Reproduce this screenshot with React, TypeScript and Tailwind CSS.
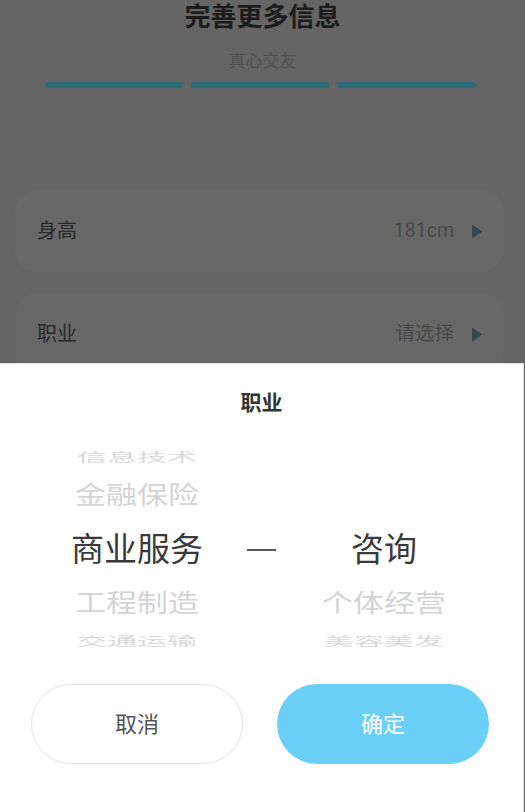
import React from "react";

const font = { fontFamily: '"Roboto", "Noto Sans CJK SC", sans-serif' };

type Row = { label: string; value: string };

const rows: Row[] = [
  { label: "身高", value: "181cm" },
  { label: "职业", value: "请选择" },
];

const leftItems = ["信息技术", "金融保险", "商业服务", "工程制造", "交通运输"];
const rightItems = ["", "", "咨询", "个体经营", "美容美发"];

function Arrow() {
  return (
    <svg width="12" height="15" viewBox="0 0 12 15" className="shrink-0">
      <path d="M1 0.5 L11.5 7.5 L1 14.5 Z" fill="#34494c" />
    </svg>
  );
}

function WheelColumn({ items, className }: { items: string[]; className: string }) {
  return (
    <div className={`flex flex-col items-center ${className}`}>
      {/* outer top (tilted away) */}
      <div className="flex h-[24px] items-center justify-center">
        <span className="block text-[30px] leading-[30px] text-[#d9d9d9] scale-y-[0.4] whitespace-nowrap">
          {items[0]}
        </span>
      </div>
      <div className="flex h-[52px] items-center justify-center">
        <span className="block text-[31px] leading-[36px] text-[#d4d4d4] scale-y-[0.8] whitespace-nowrap">
          {items[1]}
        </span>
      </div>
      <div className="flex h-[56px] items-center justify-center">
        <span className="block text-[33px] leading-[40px] text-[#3a3a3a] whitespace-nowrap">
          {items[2]}
        </span>
      </div>
      <div className="flex h-[52px] items-center justify-center">
        <span className="block text-[31px] leading-[36px] text-[#d4d4d4] scale-y-[0.8] whitespace-nowrap">
          {items[3]}
        </span>
      </div>
      <div className="flex h-[24px] items-center justify-center">
        <span className="block text-[30px] leading-[30px] text-[#d9d9d9] scale-y-[0.4] whitespace-nowrap">
          {items[4]}
        </span>
      </div>
    </div>
  );
}

export default function App() {
  return (
    <div className="relative h-[812px] w-[525px] overflow-hidden bg-[#646564]" style={font}>
      {/* Dimmed page behind the sheet */}
      <div className="flex flex-col">
        <h1 className="text-center text-[26px] font-bold leading-[34px] text-[#1c1c1c]">
          完善更多信息
        </h1>
        <p className="mt-[15px] text-center text-[17px] leading-[24px] text-[#505050]">
          真心交友
        </p>
        <div className="mt-[9px] flex gap-[8px] pl-[45px]">
          <div className="h-[6px] w-[138px] rounded-full bg-[#2b6b7a]" />
          <div className="h-[6px] w-[138px] rounded-full bg-[#2b6b7a]" />
          <div className="h-[6px] w-[139px] rounded-full bg-[#2b6b7a]" />
        </div>

        <div className="mt-[102px] flex flex-col gap-[21px] px-[15px] pr-[21px]">
          {rows.map((r) => (
            <div
              key={r.label}
              className="flex h-[82px] items-center justify-between rounded-[22px] bg-[#686868] pl-[22px] pr-[21px]"
            >
              <span className="text-[20px] text-[#282828]">{r.label}</span>
              <div className="flex items-center gap-[17px]">
                <span className="text-[19.5px] text-[#484848]">{r.value}</span>
                <Arrow />
              </div>
            </div>
          ))}
        </div>
      </div>

      {/* Bottom sheet picker */}
      <div className="absolute bottom-0 left-0 h-[449px] w-[524px] border-t border-r border-[#e2e2e2] bg-white">
        <h2 className="pt-[25px] text-center text-[21px] font-bold leading-[28px] text-[#333333]">
          职业
        </h2>

        <div className="mt-[29px] flex items-center">
          <WheelColumn items={leftItems} className="ml-[37px] w-[200px]" />
          <div className="flex w-[48px] justify-center">
            <div className="h-[2px] w-[29px] bg-[#555555]" />
          </div>
          <WheelColumn items={rightItems} className="w-[198px]" />
        </div>

        <div className="mt-[30px] flex gap-[34px] pl-[31px]">
          <button className="flex h-[80px] w-[212px] items-center justify-center rounded-full border border-[#e3e3e3] bg-white text-[22px] text-[#555555]">
            取消
          </button>
          <button className="flex h-[80px] w-[212px] items-center justify-center rounded-full bg-[#6bd0f7] text-[22px] text-white">
            确定
          </button>
        </div>
      </div>
    </div>
  );
}
